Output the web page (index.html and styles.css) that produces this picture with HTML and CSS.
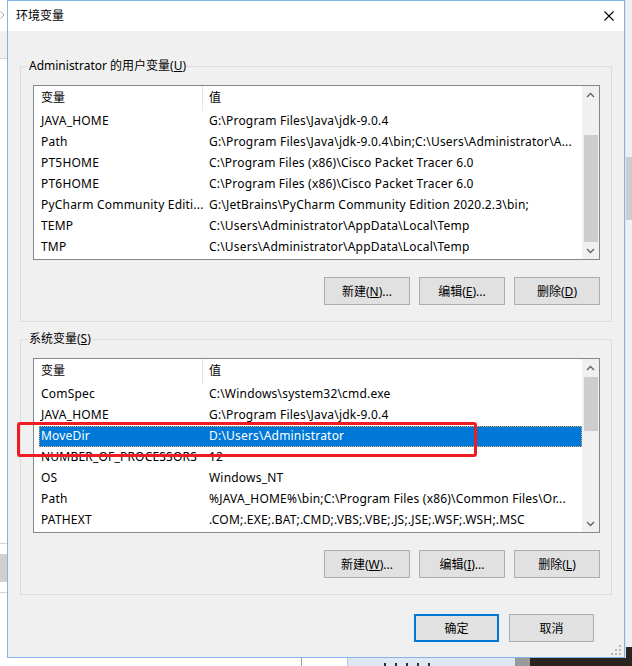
FILE: index.html
```html
<!DOCTYPE html>
<html>
  <head>
    <meta charset="utf-8">
    <title>环境变量</title>
    <link rel="stylesheet" href="styles.css">
  </head>
  <body>
    <div class="desktop">
      <!-- window behind, left edge -->
      <div class="side-left">
        <div class="left-top">
          <svg width="5" height="8" viewBox="0 0 5 8"><path d="M0.5 0.5 L4 4 L0.5 7.5" fill="none" stroke="#a8a8a8" stroke-width="1" /></svg>
        </div>
        <div class="left-band"></div>
        <div class="left-fill"></div>
        <div class="left-box"></div>
        <div class="left-rest"></div>
      </div>

      <div class="dialog">
        <div class="title-bar">
          <span class="title-text">环境变量</span>
          <svg class="close-icon" width="10" height="10" viewBox="0 0 10 10">
            <path d="M0.5 0.5 L9.5 9.5 M9.5 0.5 L0.5 9.5" stroke="#000" stroke-width="1.1" fill="none" />
          </svg>
        </div>

        <div class="dialog-body">
          <fieldset class="group">
            <legend class="group-title">Administrator 的用户变量(<u>U</u>)</legend>
            <div class="list">
              <div class="list-main">
                <div class="list-head">
                  <div class="cell-name">变量</div>
                  <div class="cell-value">值</div>
                </div>
                <div class="row"><div class="cell-name">JAVA_HOME</div><div class="cell-value">G:\Program Files\Java\jdk-9.0.4</div></div>
                <div class="row"><div class="cell-name">Path</div><div class="cell-value">G:\Program Files\Java\jdk-9.0.4\bin;C:\Users\Administrator\A...</div></div>
                <div class="row"><div class="cell-name">PT5HOME</div><div class="cell-value">C:\Program Files (x86)\Cisco Packet Tracer 6.0</div></div>
                <div class="row"><div class="cell-name">PT6HOME</div><div class="cell-value">C:\Program Files (x86)\Cisco Packet Tracer 6.0</div></div>
                <div class="row"><div class="cell-name">PyCharm Community Editi...</div><div class="cell-value">G:\JetBrains\PyCharm Community Edition 2020.2.3\bin;</div></div>
                <div class="row"><div class="cell-name">TEMP</div><div class="cell-value">C:\Users\Administrator\AppData\Local\Temp</div></div>
                <div class="row"><div class="cell-name">TMP</div><div class="cell-value">C:\Users\Administrator\AppData\Local\Temp</div></div>
              </div>
              <div class="scrollbar">
                <div class="arrow">
                  <svg width="9" height="6" viewBox="0 0 9 6"><path d="M1 5 L4.5 1.5 L8 5" fill="none" stroke="#606060" stroke-width="1.3" /></svg>
                </div>
                <div class="track"><div class="thumb" style="margin-top: 32px; height: 107px"></div></div>
                <div class="arrow">
                  <svg width="9" height="6" viewBox="0 0 9 6"><path d="M1 1 L4.5 4.5 L8 1" fill="none" stroke="#606060" stroke-width="1.3" /></svg>
                </div>
              </div>
            </div>
            <div class="btn-row">
              <button type="button" class="btn">新建(<u>N</u>)...</button>
              <button type="button" class="btn">编辑(<u>E</u>)...</button>
              <button type="button" class="btn">删除(<u>D</u>)</button>
            </div>
          </fieldset>

          <fieldset class="group group-system">
            <legend class="group-title">系统变量(<u>S</u>)</legend>
            <div class="list">
              <div class="list-main">
                <div class="list-head">
                  <div class="cell-name">变量</div>
                  <div class="cell-value">值</div>
                </div>
                <div class="row"><div class="cell-name">ComSpec</div><div class="cell-value">C:\Windows\system32\cmd.exe</div></div>
                <div class="row"><div class="cell-name">JAVA_HOME</div><div class="cell-value">G:\Program Files\Java\jdk-9.0.4</div></div>
                <div class="row row-selected"><div class="cell-name">MoveDir</div><div class="cell-value">D:\Users\Administrator</div></div>
                <div class="row"><div class="cell-name">NUMBER_OF_PROCESSORS</div><div class="cell-value">12</div></div>
                <div class="row"><div class="cell-name">OS</div><div class="cell-value">Windows_NT</div></div>
                <div class="row"><div class="cell-name">Path</div><div class="cell-value">%JAVA_HOME%\bin;C:\Program Files (x86)\Common Files\Or...</div></div>
                <div class="row"><div class="cell-name">PATHEXT</div><div class="cell-value">.COM;.EXE;.BAT;.CMD;.VBS;.VBE;.JS;.JSE;.WSF;.WSH;.MSC</div></div>
              </div>
              <div class="scrollbar">
                <div class="arrow">
                  <svg width="9" height="6" viewBox="0 0 9 6"><path d="M1 5 L4.5 1.5 L8 5" fill="none" stroke="#606060" stroke-width="1.3" /></svg>
                </div>
                <div class="track"><div class="thumb" style="margin-top: 1px; height: 54px"></div></div>
                <div class="arrow">
                  <svg width="9" height="6" viewBox="0 0 9 6"><path d="M1 1 L4.5 4.5 L8 1" fill="none" stroke="#606060" stroke-width="1.3" /></svg>
                </div>
              </div>
            </div>
            <div class="btn-row">
              <button type="button" class="btn">新建(<u>W</u>)...</button>
              <button type="button" class="btn">编辑(<u>I</u>)...</button>
              <button type="button" class="btn">删除(<u>L</u>)</button>
            </div>
          </fieldset>

          <div class="dialog-buttons">
            <button type="button" class="btn btn-default">确定</button>
            <button type="button" class="btn">取消</button>
          </div>
        </div>

        <svg class="grip" width="10" height="10" viewBox="0 0 10 10">
          <rect x="8" y="0" width="2" height="2" fill="#b8b8b8" />
          <rect x="4" y="4" width="2" height="2" fill="#b8b8b8" />
          <rect x="8" y="4" width="2" height="2" fill="#b8b8b8" />
          <rect x="0" y="8" width="2" height="2" fill="#b8b8b8" />
          <rect x="4" y="8" width="2" height="2" fill="#b8b8b8" />
          <rect x="8" y="8" width="2" height="2" fill="#b8b8b8" />
        </svg>
      </div>

      <!-- window behind, right edge -->
      <div class="side-right">
        <div class="right-top"></div>
        <div class="right-thumb"></div>
        <div class="right-fill"></div>
        <div class="right-dark"></div>
      </div>

      <!-- windows below the dialog -->
      <div class="bottom-strip">
        <div class="strip-white"></div>
        <div class="strip-white strip-narrow"></div>
        <div class="strip-panel">
          <span class="tick"></span><span class="tick"></span><span class="tick"></span><span class="tick"></span><span class="tick"></span>
        </div>
        <div class="strip-gray"></div>
        <div class="strip-dark"></div>
      </div>

      <!-- red annotation box -->
      <div class="mark"></div>
    </div>
  </body>
</html>
```

FILE: styles.css
```css
* {
  box-sizing: border-box;
}

body {
  margin: 0;
  background: #ffffff;
  font-family: "Noto Sans", "Noto Sans CJK SC", sans-serif;
  font-size: 12px;
  color: #000000;
}

.desktop {
  position: relative;
  display: grid;
  grid-template-columns: 7px 618px 7px;
  grid-template-rows: 658px 8px;
  width: 632px;
  height: 666px;
  overflow: hidden;
}

/* background windows */
.side-left {
  display: flex;
  flex-direction: column;
  background: #ffffff;
}

.left-top {
  height: 31px;
  padding-top: 6px;
}

.left-band {
  height: 28px;
  background: #f0f0f0;
  border-bottom: 1px solid #d6d6d6;
}

.left-fill {
  height: 484px;
}

.left-box {
  height: 50px;
  border-top: 1px solid #d6d6d6;
  border-bottom: 1px solid #d6d6d6;
  background: linear-gradient(#ffffff 0 10px, #cfcfcf 10px 38px, #ffffff 38px);
}

.left-rest {
  flex: 1;
}

.side-right {
  display: flex;
  flex-direction: column;
  background: #f0f0f0;
  border-left: 1px solid #e2e2e2;
}

.right-top {
  height: 157px;
}

.right-thumb {
  height: 63px;
  background: #cdcdcd;
}

.right-fill {
  flex: 1;
}

.right-dark {
  height: 11px;
  background: #2b2521;
}

.bottom-strip {
  grid-column: 1 / 4;
  display: flex;
}

.strip-white {
  width: 302px;
  background: #ffffff;
  border-right: 1px solid #a0a0a0;
}

.strip-narrow {
  width: 45px;
  border-right: none;
}

.strip-panel {
  display: flex;
  align-items: flex-end;
  gap: 9px;
  width: 168px;
  padding: 0 0 0 36px;
  background: #dde8f4;
  border-left: 1px solid #a9c8e8;
}

.tick {
  width: 2px;
  height: 3px;
  background: #303030;
}

.strip-gray {
  width: 15px;
  background: #9a9a9a;
}

.strip-dark {
  flex: 1;
  background: #2b2521;
}

/* dialog window */
.dialog {
  position: relative;
  display: flex;
  flex-direction: column;
  border: 1px solid #7eb4ea;
  background: #f0f0f0;
}

.title-bar {
  display: flex;
  align-items: center;
  justify-content: space-between;
  height: 30px;
  padding: 0 10px 0 8px;
  background: #ffffff;
}

.title-text {
  line-height: 16px;
}

.dialog-body {
  flex: 1;
  padding: 28px 12px 0 12px;
}

.group {
  margin: 0;
  padding: 12px 11px 16px 12px;
  border: 1px solid #dcdcdc;
  min-width: 0;
}

.group-system {
  margin-top: 10px;
}

.group-title {
  margin-left: -5px;
  padding: 0 1px;
  line-height: 14px;
}

.list {
  display: flex;
  height: 175px;
  border: 1px solid #828790;
  background: #ffffff;
}

.list-main {
  flex: 1;
  min-width: 0;
  overflow: hidden;
}

.list-head {
  display: flex;
  height: 25px;
  line-height: 24px;
  margin-left: 5px;
}

.list-head .cell-name {
  border-right: 1px solid #e5e5e5;
}

.row {
  display: flex;
  height: 21px;
  line-height: 20px;
  margin-left: 5px;
  white-space: nowrap;
  letter-spacing: 0.2px;
}

.cell-name {
  flex: none;
  width: 164px;
  padding-left: 2px;
  overflow: hidden;
}

.cell-value {
  flex: 1;
  min-width: 0;
  padding-left: 6px;
  overflow: hidden;
  white-space: nowrap;
}

.row-selected {
  background: #0078d7;
  color: #ffffff;
  outline: 1px dotted #f2a65a;
  outline-offset: -1px;
}

.scrollbar {
  display: flex;
  flex-direction: column;
  width: 17px;
  background: #f0f0f0;
}

.arrow {
  display: flex;
  align-items: center;
  justify-content: center;
  height: 17px;
}

.track {
  flex: 1;
}

.thumb {
  margin-left: 2px;
  margin-right: 1px;
  background: #cdcdcd;
}

.btn-row {
  display: flex;
  justify-content: flex-end;
  gap: 9px;
  margin-top: 17px;
}

.btn {
  width: 86px;
  height: 28px;
  padding: 0;
  border: 1px solid #adadad;
  background: #e1e1e1;
  font-family: inherit;
  font-size: 12px;
  color: #000000;
}

.dialog-buttons {
  display: flex;
  justify-content: flex-end;
  gap: 10px;
  margin-top: 19px;
  padding-right: 18px;
}

.dialog-buttons .btn {
  width: 85px;
}

.btn-default {
  border: 2px solid #0078d7;
}

.grip {
  position: absolute;
  right: 3px;
  bottom: 2px;
}

.mark {
  position: absolute;
  left: 17px;
  top: 422px;
  width: 460px;
  height: 35px;
  border: 3px solid #ee1d23;
  border-radius: 3px;
}
```
